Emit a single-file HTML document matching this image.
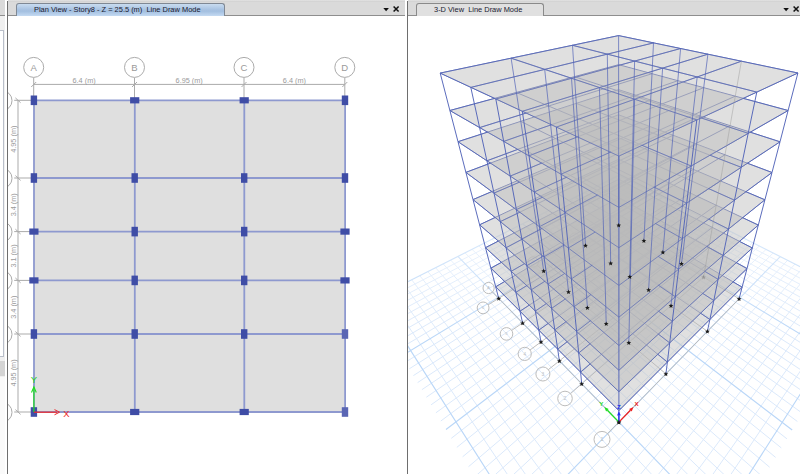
<!DOCTYPE html><html><head><meta charset="utf-8"><title>ETABS views</title><style>
html,body{margin:0;padding:0}
body{width:800px;height:474px;position:relative;overflow:hidden;background:#fff;font-family:"Liberation Sans",Arial,sans-serif}
.a{position:absolute}
.bar{position:absolute;top:0;height:15px;background:#dadada;border-bottom:1px solid #8e8e8e}
.bar:before{content:"";position:absolute;left:0;right:0;top:0;height:2px;background:linear-gradient(#e4e4e4,#cfcfcf)}
.tab{position:absolute;top:3px;height:13px;box-sizing:border-box;border:1px solid #8a8a8a;border-bottom:none;border-radius:3px 3px 0 0;font-size:8px;line-height:10px;white-space:pre;color:#1a1a30}
.tab span{position:absolute;top:1px;transform-origin:0 50%;transform:scaleX(0.929)}
.ic{position:absolute;top:0}
</style></head><body>
<div class="a" style="left:0;top:0;width:5px;height:15px;background:#dadada;border-bottom:1px solid #8e8e8e"></div>
<div class="a" style="left:0;top:16px;width:5px;height:458px;background:#f0f0f0"></div>
<div class="a" style="left:-3px;top:30px;width:5px;height:325px;background:#fff;border:1px solid #b9bfca"></div>
<div class="a" style="left:0;top:361px;width:5px;height:15px;background:#d4d4d4"></div>
<div class="a" style="left:0;top:377px;width:5px;height:97px;background:#fafafa"></div>
<div class="a" style="left:5px;top:0;width:2px;height:474px;background:#fff"></div>
<div class="a" style="left:7px;top:1px;width:1px;height:473px;background:#6e6e6e"></div>
<div class="bar" style="left:8px;width:397px"></div>
<div class="a" style="left:405px;top:0;width:2px;height:474px;background:#fff"></div>
<div class="a" style="left:407px;top:1px;width:1px;height:473px;background:#6e6e6e"></div>
<div class="bar" style="left:408px;width:392px"></div>
<div class="tab" style="left:16px;width:209px;background:linear-gradient(#c9dcf0 0%,#a9c3e2 45%,#a3bfe0 60%,#c4daf2 100%);border-color:#7f8894"><span id="t1" style="left:16.8px">Plan View - Story8 - Z = 25.5 (m)  Line Draw Mode</span></div>
<div class="tab" style="left:416px;width:128px;background:#e0e0e0"><span id="t2" style="left:16.8px">3-D View  Line Draw Mode</span></div>
<svg class="ic" style="left:383px" width="18" height="16" viewBox="0 0 18 16"><path d="M0.3 8h5.6l-2.8 3.2z" fill="#111"/><path d="M10.6 6.4l5 5.2M15.6 6.4l-5 5.2" stroke="#111" stroke-width="1.5" fill="none"/></svg>
<svg class="ic" style="left:783px" width="18" height="16" viewBox="0 0 18 16"><path d="M0.3 8h5.6l-2.8 3.2z" fill="#111"/><path d="M10.6 6.4l5 5.2M15.6 6.4l-5 5.2" stroke="#111" stroke-width="1.5" fill="none"/></svg>
<svg width="397" height="458" viewBox="8 16 397 458" style="position:absolute;left:8px;top:16px">
<rect x="33.7" y="100.3" width="311.1" height="311.7" fill="#dfdfdf"/>
<path d="M33.7 77.4V100.3M31.2 87L36.2 82M134.5 77.4V100.3M132.0 87L137.0 82M244.0 77.4V100.3M241.5 87L246.5 82M344.8 77.4V100.3M342.3 87L347.3 82M33.7 84.4H344.8M14.2 100.3H33.7M15.4 97.9L20.6 102.7M14.2 178.0H33.7M15.4 175.6L20.6 180.4M14.2 231.6H33.7M15.4 229.2L20.6 234.0M14.2 280.4H33.7M15.4 278.0L20.6 282.8M14.2 334.0H33.7M15.4 331.6L20.6 336.4M14.2 412.0H33.7M15.4 409.6L20.6 414.4M18 100.3V412.0" fill="none" stroke="#ababab" stroke-width="1"/>
<circle cx="33.7" cy="67.4" r="10" fill="#fff" stroke="#ababab"/>
<circle cx="134.5" cy="67.4" r="10" fill="#fff" stroke="#ababab"/>
<circle cx="244.0" cy="67.4" r="10" fill="#fff" stroke="#ababab"/>
<circle cx="344.8" cy="67.4" r="10" fill="#fff" stroke="#ababab"/>
<circle cx="2" cy="100.6" r="10" fill="#fff" stroke="#ababab"/>
<circle cx="2" cy="178.3" r="10" fill="#fff" stroke="#ababab"/>
<circle cx="2" cy="231.9" r="10" fill="#fff" stroke="#ababab"/>
<circle cx="2" cy="280.7" r="10" fill="#fff" stroke="#ababab"/>
<circle cx="2" cy="334.3" r="10" fill="#fff" stroke="#ababab"/>
<circle cx="2" cy="412.3" r="10" fill="#fff" stroke="#ababab"/>
<g font-family="Liberation Sans, Arial, sans-serif" fill="#9a9a9a" text-anchor="middle">
<text x="33.7" y="70.8" font-size="9.5">A</text>
<text x="134.5" y="70.8" font-size="9.5">B</text>
<text x="244.0" y="70.8" font-size="9.5">C</text>
<text x="344.8" y="70.8" font-size="9.5">D</text>
<text x="84.1" y="82.6" font-size="7.3">6.4 (m)</text>
<text x="189.2" y="82.6" font-size="7.3">6.95 (m)</text>
<text x="294.4" y="82.6" font-size="7.3">6.4 (m)</text>
<text transform="translate(16.2 373.0) rotate(-90)" font-size="7.3">4.95 (m)</text>
<text transform="translate(16.2 307.2) rotate(-90)" font-size="7.3">3.4 (m)</text>
<text transform="translate(16.2 256.0) rotate(-90)" font-size="7.3">3.1 (m)</text>
<text transform="translate(16.2 204.8) rotate(-90)" font-size="7.3">3.4 (m)</text>
<text transform="translate(16.2 139.2) rotate(-90)" font-size="7.3">4.95 (m)</text>
</g>
<path d="M34.0 100.3V412.0M134.8 100.3V412.0M244.3 100.3V412.0M345.1 100.3V412.0M33.7 100.3H344.8M33.7 178.0H344.8M33.7 231.6H344.8M33.7 280.4H344.8M33.7 334.0H344.8M33.7 412.0H344.8" fill="none" stroke="#8e99cf" stroke-width="1.8"/>
<rect x="30.7" y="95.5" width="6.4" height="9.6" fill="#3f4da6"/>
<rect x="130.1" y="97.2" width="9.2" height="6.2" fill="#3f4da6"/>
<rect x="239.6" y="97.2" width="9.2" height="6.2" fill="#3f4da6"/>
<rect x="341.8" y="95.5" width="6.4" height="9.6" fill="#3f4da6"/>
<rect x="30.7" y="173.2" width="6.4" height="9.6" fill="#3f4da6"/>
<rect x="131.5" y="173.2" width="6.4" height="9.6" fill="#3f4da6"/>
<rect x="241.0" y="173.2" width="6.4" height="9.6" fill="#3f4da6"/>
<rect x="341.8" y="173.2" width="6.4" height="9.6" fill="#3f4da6"/>
<rect x="29.3" y="228.5" width="9.2" height="6.2" fill="#3f4da6"/>
<rect x="131.5" y="226.8" width="6.4" height="9.6" fill="#3f4da6"/>
<rect x="241.0" y="226.8" width="6.4" height="9.6" fill="#3f4da6"/>
<rect x="340.4" y="228.5" width="9.2" height="6.2" fill="#3f4da6"/>
<rect x="29.3" y="277.3" width="9.2" height="6.2" fill="#3f4da6"/>
<rect x="131.5" y="275.6" width="6.4" height="9.6" fill="#3f4da6"/>
<rect x="241.0" y="275.6" width="6.4" height="9.6" fill="#3f4da6"/>
<rect x="340.4" y="277.3" width="9.2" height="6.2" fill="#3f4da6"/>
<rect x="30.7" y="329.2" width="6.4" height="9.6" fill="#3f4da6"/>
<rect x="131.5" y="329.2" width="6.4" height="9.6" fill="#3f4da6"/>
<rect x="241.0" y="329.2" width="6.4" height="9.6" fill="#3f4da6"/>
<rect x="341.8" y="329.2" width="6.4" height="9.6" fill="#5a66b4"/>
<rect x="30.7" y="407.2" width="6.4" height="9.6" fill="#3f4da6"/>
<rect x="130.1" y="408.9" width="9.2" height="6.2" fill="#3f4da6"/>
<rect x="239.6" y="408.9" width="9.2" height="6.2" fill="#3f4da6"/>
<rect x="341.8" y="407.2" width="6.4" height="9.6" fill="#5a66b4"/>
<path d="M33.9 412.0V387.5" stroke="#1fe01f" stroke-width="1.2" fill="none"/>
<path d="M31.5 392.5l2.4 -5.5l2.4 5.5" stroke="#1fe01f" stroke-width="1.1" fill="none"/>
<path d="M33.9 412.2H57" stroke="#f02828" stroke-width="1.2" fill="none"/>
<path d="M54.5 409.6l5 2.6l-5 2.6" stroke="#f02828" stroke-width="1" fill="none"/>
<text x="33.9" y="382.8" font-family="Liberation Sans, Arial, sans-serif" font-size="9.5" fill="#1fd01f" text-anchor="middle">Y</text>
<text x="66.3" y="416.8" font-family="Liberation Sans, Arial, sans-serif" font-size="9.5" fill="#f02828" text-anchor="middle">X</text>
</svg>
<svg width="392" height="458" viewBox="0 0 392 458" style="position:absolute;left:408px;top:16px">
<g fill="none" stroke-width="1"><path stroke="#dbe9fb" d="M102.5 463.0L-5.6 301.4M319.5 463.4L396.2 349.3M120.9 463.2L-5.1 284.0M301.1 463.6L397.3 327.3M139.3 463.5L-4.7 268.0M282.6 463.8L396.3 310.1M157.7 463.8L3.7 263.8M264.2 464.0L397.3 291.8M176.1 464.0L11.8 259.7M245.7 464.2L396.3 277.5M194.5 464.3L19.8 255.6M227.3 464.4L397.3 262.1M213.0 464.6L27.6 251.7M208.8 464.6L394.7 251.9M231.5 464.9L35.2 247.9M190.3 464.8L387.0 248.0M250.0 465.1L42.7 244.1M171.8 465.0L379.6 244.3M287.1 465.7L57.0 236.8M134.8 465.4L365.1 237.0M305.7 466.0L64.0 233.3M116.2 465.6L358.1 233.4M324.3 466.2L70.8 229.9M97.7 465.8L351.3 230.0M342.9 466.5L77.5 226.5M79.1 466.0L344.6 226.6M355.4 461.4L84.0 223.3M66.7 460.8L338.1 223.3M361.6 451.2L90.3 220.0M60.5 450.7L331.7 220.1M367.6 441.4L96.6 216.9M54.6 440.8L325.4 217.0M373.3 431.9L102.7 213.8M48.8 431.4L319.3 213.9M378.9 422.8L108.7 210.8M43.3 422.3L313.3 210.8M389.4 405.5L120.3 204.9M32.8 405.0L301.7 205.0M394.4 397.3L125.9 202.1M27.9 396.8L296.0 202.1M399.2 389.4L131.4 199.3M23.1 388.8L290.5 199.3M398.4 377.9L136.8 196.6M18.4 381.2L285.1 196.6M397.5 366.9L142.1 193.9M13.9 373.7L279.8 193.9M396.7 356.4L147.3 191.3M9.6 366.6L274.6 191.3M401.1 349.8L152.4 188.7M5.4 359.6L269.5 188.7M400.3 340.1L157.4 186.2M1.3 352.8L264.4 186.2M399.5 330.9L162.3 183.7M-2.7 346.3L259.5 183.7M398.0 313.5L171.9 178.9M-5.1 330.7L250.0 178.9M397.3 305.4L176.6 176.5M-8.8 324.8L245.3 176.5M396.6 297.6L181.1 174.2M-7.3 316.2L240.7 174.2M400.4 292.6L185.6 172.0M-6.0 308.0L236.2 172.0M399.7 285.3L190.0 169.7M-4.7 300.1L231.8 169.7M399.0 278.3L194.3 167.5M-8.1 295.1L227.5 167.5M398.3 271.6L198.6 165.4M-6.8 287.7L223.2 165.4M397.7 265.1L202.8 163.3M-5.5 280.6L219.1 163.3M397.1 258.8L206.9 161.2M-4.3 273.8L215.0 161.2"/><path stroke="#bad7f8" stroke-width="1.15" d="M84.1 462.7L-4.3 323.6M337.9 463.2L397.3 370.2M268.6 465.4L49.9 240.4M153.3 465.2L372.2 240.6M384.2 414.0L114.5 207.8M38.0 413.5L307.4 207.9M398.7 322.0L167.2 181.3M-6.5 340.0L254.7 181.3M396.5 252.8L210.9 159.2M-7.5 269.4L210.9 159.2"/></g>
<defs><linearGradient id="fg" x1="0" y1="0" x2="0" y2="1"><stop offset="0" stop-color="#fff" stop-opacity="0.6"/><stop offset="1" stop-color="#fff" stop-opacity="0"/></linearGradient></defs><rect x="0" y="185" width="392" height="140" fill="url(#fg)"/>
<g fill="none" stroke="#bdbdbd" stroke-width="1"><path d="M331.1 282.8L199.6 417.7M295.6 261.1L162.5 377.6M273.5 247.6L140.3 353.7M254.9 236.2L122.0 334.0M235.9 224.6L103.8 314.3M210.7 209.2L80.1 288.8M210.9 406.1L84.5 276.0M257.9 357.9L129.1 249.3M299.4 315.3L170.6 224.6M331.1 282.8L203.6 204.9"/>
<circle cx="194.0" cy="423.4" r="8.0"/>
<circle cx="157.0" cy="382.5" r="7.3"/>
<circle cx="134.9" cy="358.0" r="7.0"/>
<circle cx="116.7" cy="337.9" r="6.6"/>
<circle cx="98.5" cy="317.9" r="6.3"/>
<circle cx="75.1" cy="291.9" r="5.9"/>
<circle cx="80.6" cy="272.0" r="5.6"/>
<circle cx="125.2" cy="246.0" r="5.2"/>
<circle cx="166.7" cy="221.8" r="4.8"/>
<circle cx="199.8" cy="202.5" r="4.5"/>
</g>
<g font-family="Liberation Sans, sans-serif" fill="#c0c0c0" text-anchor="middle">
<text x="194.0" y="425.4" font-size="5.6">1</text>
<text x="157.0" y="384.3" font-size="5.1">2</text>
<text x="134.9" y="359.8" font-size="4.9">3</text>
<text x="116.7" y="339.6" font-size="4.6">4</text>
<text x="98.5" y="319.4" font-size="4.4">5</text>
<text x="75.1" y="293.4" font-size="4.1">6</text>
<text x="80.6" y="273.4" font-size="3.9">A</text>
<text x="125.2" y="247.3" font-size="3.6">B</text>
<text x="166.7" y="223.0" font-size="3.4">C</text>
<text x="199.8" y="203.7" font-size="3.1">D</text>
</g>
<defs><path id="sup" d="M0.00 -2.20L0.65 -0.59L2.38 -0.47L1.05 0.64L1.47 2.32L0.00 1.40L-1.47 2.32L-1.05 0.64L-2.38 -0.47L-0.65 -0.59Z" fill="#1a1a1a"/></defs>
<path d="M210.9 394.6L87.7 270.8M259.4 346.1L134.0 243.6M301.9 303.5L176.8 218.4M334.1 271.2L210.7 198.5M210.9 394.6L334.1 271.2M172.6 356.1L297.6 249.6M149.7 333.1L275.0 236.3M130.8 314.1L255.9 225.1M112.0 295.2L236.5 213.7M87.7 270.8L210.7 198.5M210.9 375.7L82.9 252.2M261.7 326.9L131.2 225.5M305.8 284.5L175.6 201.0M339.0 252.6L210.7 181.7M210.9 375.7L339.0 252.6M170.7 337.0L300.7 231.5M146.8 313.9L277.2 218.4M127.3 295.1L257.4 207.5M107.9 276.3L237.3 196.4M82.9 252.2L210.7 181.7M210.9 354.3L77.5 231.7M264.3 305.3L128.2 205.7M310.1 263.3L174.4 182.0M344.3 232.0L210.7 163.3M210.9 354.3L344.3 232.0M168.6 315.4L304.3 211.4M143.6 292.4L279.7 198.8M123.3 273.8L259.1 188.2M103.2 255.3L238.2 177.5M77.5 231.7L210.7 163.3M210.9 329.5L71.6 208.8M267.3 280.8L124.8 183.7M315.1 239.5L173.0 161.0M350.3 209.1L210.7 143.3M210.9 329.5L350.3 209.1M166.1 290.7L308.1 189.2M140.0 268.1L282.4 177.1M118.8 249.7L260.9 167.0M98.1 231.7L239.2 156.7M71.6 208.8L210.7 143.3M210.9 301.2L65.0 183.6M270.6 253.2L121.1 159.7M320.5 213.1L171.6 138.3M356.9 183.8L210.6 121.7M210.9 301.2L356.9 183.8M163.4 262.9L312.4 164.9M136.0 240.8L285.4 153.4M113.9 223.0L262.9 143.9M92.3 205.6L240.3 134.3M65.0 183.6L210.6 121.7M210.9 269.4L57.9 156.4M274.4 222.6L117.2 134.0M326.5 184.2L170.0 114.1M364.0 156.5L210.6 98.8M210.9 269.4L364.0 156.5M160.4 232.0L317.0 138.8M131.5 210.7L288.6 128.1M108.4 193.6L265.0 119.3M86.0 177.1L241.4 110.4M57.9 156.4L210.6 98.8M210.9 231.7L50.0 125.7M278.7 187.2L112.8 105.4M333.2 151.3L168.3 87.4M372.0 125.8L210.6 73.7M210.9 231.7L372.0 125.8M156.8 196.1L322.1 109.7M126.3 176.0L292.1 100.0M102.2 160.1L267.4 92.0M78.9 144.8L242.7 84.0M50.0 125.7L210.6 73.7M210.9 191.4L41.9 94.5M283.2 150.0L108.4 76.5M340.2 117.3L166.5 60.7M380.1 94.5L210.6 48.7M210.9 191.4L380.1 94.5M153.1 158.2L327.2 80.2M121.0 139.8L295.7 71.7M95.7 125.4L269.8 64.7M71.6 111.6L244.0 57.7M41.9 94.5L210.6 48.7M210.9 140.1L32.2 57.1M288.8 103.9L103.1 42.2M348.8 76.1L164.5 29.3M389.9 57.0L210.6 19.6M210.9 140.1L389.9 57.0M148.4 111.1L333.4 45.2M114.3 95.3L299.9 38.2M87.8 83.0L272.6 32.5M62.8 71.4L245.5 26.9M32.2 57.1L210.6 19.6" fill="none" stroke="#5264b8" stroke-opacity="1.00" stroke-width="1.00"/>
<polygon points="210.9,394.6 334.1,271.2 210.7,198.5 87.7,270.8" fill="rgba(187,187,187,0.45)"/>
<polygon points="210.9,375.7 339.0,252.6 210.7,181.7 82.9,252.2" fill="rgba(187,187,187,0.45)"/>
<polygon points="210.9,354.3 344.3,232.0 210.7,163.3 77.5,231.7" fill="rgba(187,187,187,0.45)"/>
<polygon points="210.9,329.5 350.3,209.1 210.7,143.3 71.6,208.8" fill="rgba(187,187,187,0.45)"/>
<polygon points="210.9,301.2 356.9,183.8 210.6,121.7 65.0,183.6" fill="rgba(187,187,187,0.45)"/>
<polygon points="210.9,269.4 364.0,156.5 210.6,98.8 57.9,156.4" fill="rgba(187,187,187,0.45)"/>
<polygon points="210.9,231.7 372.0,125.8 210.6,73.7 50.0,125.7" fill="rgba(187,187,187,0.45)"/>
<polygon points="210.9,191.4 380.1,94.5 210.6,48.7 41.9,94.5" fill="rgba(187,187,187,0.45)"/>
<polygon points="210.9,140.1 389.9,57.0 210.6,19.6 32.2,57.1" fill="rgba(187,187,187,0.45)"/>
<path d="M210.9 394.6L87.7 270.8M259.4 346.1L249.8 338.3M301.9 303.5L292.4 297.1M334.1 271.2L325.0 265.8M210.9 394.6L334.1 271.2M172.6 356.1L182.5 347.7M149.7 333.1L159.3 325.6M130.8 314.1L140.1 307.5M112.0 295.2L121.5 289.0M87.7 270.8L96.8 265.4M210.9 375.7L82.9 252.2M261.7 326.9L250.3 318.1M305.8 284.5L294.5 277.3M339.0 252.6L328.0 246.5M210.9 375.7L339.0 252.6M170.7 337.0L182.4 327.4M146.8 313.9L158.3 305.5M127.3 295.1L138.4 287.5M107.9 276.3L119.2 269.4M82.9 252.2L93.8 246.2M210.9 354.3L77.5 231.7M264.3 305.3L250.5 295.2M310.1 263.3L296.4 255.1M344.3 232.0L331.4 225.4M210.9 354.3L344.3 232.0M168.6 315.4L182.7 304.5M143.6 292.4L157.6 282.8M123.3 273.8L137.0 265.2M103.2 255.3L116.5 247.7M77.5 231.7L90.4 225.1M210.9 329.5L71.6 208.8M267.3 280.8L250.3 269.2M315.1 239.5L298.7 230.4M350.3 209.1L334.3 201.5M210.9 329.5L350.3 209.1M166.1 290.7L182.9 278.7M140.0 268.1L156.7 257.5M118.8 249.7L135.7 239.9M98.1 231.7L114.5 223.0M71.6 208.8L87.6 201.3M210.9 301.2L65.0 183.6M270.6 253.2L250.2 240.4M320.5 213.1L300.7 203.2M356.9 183.8L337.5 175.6M210.9 301.2L356.9 183.8M163.4 262.9L184.2 249.2M136.0 240.8L156.5 228.8M113.9 223.0L134.1 212.3M92.3 205.6L112.1 196.1M65.0 183.6L84.3 175.4M210.9 269.4L57.9 156.4M274.4 222.6L247.3 207.4M326.5 184.2L300.2 172.4M364.0 156.5L338.9 147.1M210.9 269.4L364.0 156.5M160.4 232.0L187.1 216.1M131.5 210.7L158.0 196.7M108.4 193.6L134.5 181.2M86.0 177.1L111.6 166.1M57.9 156.4L82.9 147.0M210.9 231.7L50.0 125.7M278.7 187.2L245.7 170.9M333.2 151.3L302.0 139.2M372.0 125.8L342.1 116.2M210.9 231.7L372.0 125.8M156.8 196.1L189.6 179.0M126.3 176.0L158.7 161.2M102.2 160.1L133.9 147.0M78.9 144.8L110.1 133.3M50.0 125.7L79.8 116.1M210.9 191.4L41.9 94.5M283.2 150.0L233.7 129.2M340.2 117.3L292.8 101.8M380.1 94.5L334.9 82.3M210.9 191.4L380.1 94.5M153.1 158.2L203.0 135.9M121.0 139.8L169.7 120.8M95.7 125.4L143.8 108.6M71.6 111.6L118.3 97.0M41.9 94.5L87.0 82.3M210.9 140.1L32.2 57.1M288.8 103.9L103.1 42.2M348.8 76.1L164.5 29.3M389.9 57.0L210.6 19.6M210.9 140.1L389.9 57.0M148.4 111.1L333.4 45.2M114.3 95.3L299.9 38.2M87.8 83.0L272.6 32.5M62.8 71.4L245.5 26.9M32.2 57.1L210.6 19.6" fill="none" stroke="#5264b8" stroke-opacity="0.60" stroke-width="1.00"/>
<path d="M220.8 326.6L221.1 314.8M198.2 307.6L197.9 295.8M179.4 291.7L178.6 280.1M160.5 275.8L159.3 264.3M135.7 254.9L134.0 243.6M263.0 289.6L264.3 278.0M240.6 273.8L241.3 262.3M221.8 260.6L222.0 249.2M202.7 247.2L202.5 235.9M177.5 229.4L176.8 218.4M273.5 247.6L275.0 236.3M254.9 236.2L255.9 225.1M235.9 224.6L236.5 213.7M210.7 209.2L210.7 198.5M221.1 314.8L221.5 295.7M197.9 295.8L197.4 276.9M178.6 280.1L177.3 261.4M159.3 264.3L157.3 245.8M134.0 243.6L131.2 225.5M264.3 278.0L266.5 259.3M241.3 262.3L242.5 243.9M222.0 249.2L222.4 231.0M202.5 235.9L202.2 218.1M176.8 218.4L175.6 201.0M275.0 236.3L277.2 218.4M255.9 225.1L257.4 207.5M236.5 213.7L237.3 196.4M210.7 198.5L210.7 181.7M221.5 295.7L222.0 274.4M197.4 276.9L196.7 255.9M177.3 261.4L175.9 240.6M157.3 245.8L155.1 225.4M131.2 225.5L128.2 205.7M266.5 259.3L268.8 238.6M242.5 243.9L243.8 223.5M222.4 231.0L222.9 211.0M202.2 218.1L201.9 198.4M175.6 201.0L174.4 182.0M277.2 218.4L279.7 198.8M257.4 207.5L259.1 188.2M237.3 196.4L238.2 177.5M210.7 181.7L210.7 163.3M222.0 274.4L222.6 250.4M196.7 255.9L196.1 232.3M175.9 240.6L174.3 217.4M155.1 225.4L152.7 202.7M128.2 205.7L124.8 183.7M268.8 238.6L271.5 215.4M243.8 223.5L245.2 200.9M222.9 211.0L223.4 188.8M201.9 198.4L201.5 176.8M174.4 182.0L173.0 161.0M279.7 198.8L282.4 177.1M259.1 188.2L260.9 167.0M238.2 177.5L239.2 156.7M210.7 163.3L210.7 143.3M222.6 250.4L223.2 223.6M196.1 232.3L195.3 206.1M174.3 217.4L172.5 191.9M152.7 202.7L150.0 177.8M124.8 183.7L121.1 159.7M271.5 215.4L274.4 189.9M245.2 200.9L246.8 176.0M223.4 188.8L223.9 164.6M201.5 176.8L201.1 153.1M173.0 161.0L171.6 138.3M282.4 177.1L285.4 153.4M260.9 167.0L262.9 143.9M239.2 156.7L240.3 134.3M210.7 143.3L210.6 121.7M223.2 223.6L223.9 194.2M195.3 206.1L194.5 177.6M172.5 191.9L170.6 164.1M150.0 177.8L147.1 150.9M121.1 159.7L117.2 134.0M274.4 189.9L277.6 162.3M246.8 176.0L248.4 149.2M223.9 164.6L224.5 138.5M201.1 153.1L200.7 127.9M171.6 138.3L170.0 114.1M285.4 153.4L288.6 128.1M262.9 143.9L265.0 119.3M240.3 134.3L241.4 110.4M210.6 121.7L210.6 98.8M223.9 194.2L224.7 160.6M194.5 177.6L193.6 145.2M170.6 164.1L168.4 132.8M147.1 150.9L143.9 120.7M117.2 134.0L112.8 105.4M277.6 162.3L281.1 131.1M248.4 149.2L250.3 119.2M224.5 138.5L225.2 109.4M200.7 127.9L200.3 99.8M170.0 114.1L168.3 87.4M288.6 128.1L292.1 100.0M265.0 119.3L267.4 92.0M241.4 110.4L242.7 84.0M210.6 98.8L210.6 73.7M224.7 160.6L225.6 125.8M193.6 145.2L192.6 111.9M168.4 132.8L166.2 100.8M143.9 120.7L140.6 90.0M112.8 105.4L108.4 76.5M281.1 131.1L284.8 99.2M250.3 119.2L252.3 88.6M225.2 109.4L225.8 80.0M200.3 99.8L199.8 71.5M168.3 87.4L166.5 60.7M292.1 100.0L295.7 71.7M267.4 92.0L269.8 64.7M242.7 84.0L244.0 57.7M210.6 73.7L210.6 48.7M225.6 125.8L226.6 83.3M192.6 111.9L191.4 71.6M166.2 100.8L163.5 62.3M140.6 90.0L136.7 53.4M108.4 76.5L103.1 42.2M284.8 99.2L289.2 61.0M252.3 88.6L254.6 52.2M225.8 80.0L226.6 45.1M199.8 71.5L199.3 38.1M166.5 60.7L164.5 29.3M295.7 71.7L299.9 38.2M269.8 64.7L272.6 32.5M244.0 57.7L245.5 26.9M210.6 48.7L210.6 19.6" fill="none" stroke="#5264b8" stroke-opacity="0.70" stroke-width="1.00"/>
<path d="M210.9 406.1L210.9 394.6M173.7 367.8L172.6 356.1M151.4 344.9L149.7 333.1M133.0 325.9L130.8 314.1M114.6 307.0L112.0 295.2M90.7 282.4L87.7 270.8M257.9 357.9L259.4 346.1M299.4 315.3L301.9 303.5M331.1 282.8L334.1 271.2M210.9 394.6L210.9 375.7M172.6 356.1L170.7 337.0M149.7 333.1L146.8 313.9M130.8 314.1L127.3 295.1M112.0 295.2L107.9 276.3M87.7 270.8L82.9 252.2M259.4 346.1L261.7 326.9M301.9 303.5L305.8 284.5M334.1 271.2L339.0 252.6M210.9 375.7L210.9 354.3M170.7 337.0L168.6 315.4M146.8 313.9L143.6 292.4M127.3 295.1L123.3 273.8M107.9 276.3L103.2 255.3M82.9 252.2L77.5 231.7M261.7 326.9L264.3 305.3M305.8 284.5L310.1 263.3M339.0 252.6L344.3 232.0M210.9 354.3L210.9 329.5M168.6 315.4L166.1 290.7M143.6 292.4L140.0 268.1M123.3 273.8L118.8 249.7M103.2 255.3L98.1 231.7M77.5 231.7L71.6 208.8M264.3 305.3L267.3 280.8M310.1 263.3L315.1 239.5M344.3 232.0L350.3 209.1M210.9 329.5L210.9 301.2M166.1 290.7L163.4 262.9M140.0 268.1L136.0 240.8M118.8 249.7L113.9 223.0M98.1 231.7L92.3 205.6M71.6 208.8L65.0 183.6M267.3 280.8L270.6 253.2M315.1 239.5L320.5 213.1M350.3 209.1L356.9 183.8M210.9 301.2L210.9 269.4M163.4 262.9L160.4 232.0M136.0 240.8L131.5 210.7M113.9 223.0L108.4 193.6M92.3 205.6L86.0 177.1M65.0 183.6L57.9 156.4M270.6 253.2L274.4 222.6M320.5 213.1L326.5 184.2M356.9 183.8L364.0 156.5M210.9 269.4L210.9 231.7M160.4 232.0L156.8 196.1M131.5 210.7L126.3 176.0M108.4 193.6L102.2 160.1M86.0 177.1L78.9 144.8M57.9 156.4L50.0 125.7M274.4 222.6L278.7 187.2M326.5 184.2L333.2 151.3M364.0 156.5L372.0 125.8M210.9 231.7L210.9 191.4M156.8 196.1L153.1 158.2M126.3 176.0L121.0 139.8M102.2 160.1L95.7 125.4M78.9 144.8L71.6 111.6M50.0 125.7L41.9 94.5M278.7 187.2L283.2 150.0M333.2 151.3L340.2 117.3M372.0 125.8L380.1 94.5M210.9 191.4L210.9 140.1M153.1 158.2L148.4 111.1M121.0 139.8L114.3 95.3M95.7 125.4L87.8 83.0M71.6 111.6L62.8 71.4M41.9 94.5L32.2 57.1M283.2 150.0L288.8 103.9M340.2 117.3L348.8 76.1M380.1 94.5L389.9 57.0" fill="none" stroke="#5264b8" stroke-opacity="0.95" stroke-width="1.00"/>
<path d="M295.6 261.1L333.4 45.2" stroke="#9a9a9a" stroke-opacity="0.45" stroke-width="1" fill="none"/>
<use href="#sup" x="295.6" y="261.1" opacity="0.22"/>
<use href="#sup" x="210.9" y="406.1"/><use href="#sup" x="173.7" y="367.8"/><use href="#sup" x="151.4" y="344.9"/><use href="#sup" x="133.0" y="325.9"/><use href="#sup" x="114.6" y="307.0"/><use href="#sup" x="90.7" y="282.4"/><use href="#sup" x="257.9" y="357.9"/><use href="#sup" x="220.8" y="326.6"/><use href="#sup" x="198.2" y="307.6"/><use href="#sup" x="179.4" y="291.7"/><use href="#sup" x="160.5" y="275.8"/><use href="#sup" x="135.7" y="254.9"/><use href="#sup" x="299.4" y="315.3"/><use href="#sup" x="263.0" y="289.6"/><use href="#sup" x="240.6" y="273.8"/><use href="#sup" x="221.8" y="260.6"/><use href="#sup" x="202.7" y="247.2"/><use href="#sup" x="177.5" y="229.4"/><use href="#sup" x="331.1" y="282.8"/><use href="#sup" x="273.5" y="247.6"/><use href="#sup" x="254.9" y="236.2"/><use href="#sup" x="235.9" y="224.6"/><use href="#sup" x="210.7" y="209.2"/>
<path d="M210.9 406.1L222.4 394.3" stroke="#f02020" stroke-width="1.3" fill="none"/><path d="M225.5 391.1L223.7 395.6L221.1 393.0Z" fill="#f02020"/><text x="228.5" y="390.4" font-family="Liberation Sans, sans-serif" font-size="6.2" font-weight="bold" fill="#f02020" text-anchor="middle">X</text>
<path d="M210.9 406.1L199.4 394.3" stroke="#20e020" stroke-width="1.3" fill="none"/><path d="M196.3 391.0L200.7 393.0L198.1 395.5Z" fill="#20e020"/><text x="193.4" y="390.3" font-family="Liberation Sans, sans-serif" font-size="6.2" font-weight="bold" fill="#20e020" text-anchor="middle">Y</text>
<path d="M210.9 406.1L210.9 399.5" stroke="#2030f0" stroke-width="1.3" fill="none"/><path d="M210.9 395.0L212.7 399.5L209.1 399.5Z" fill="#2030f0"/><text x="210.9" y="393.1" font-family="Liberation Sans, sans-serif" font-size="6.2" font-weight="bold" fill="#2030f0" text-anchor="middle">Z</text>
<use href="#sup" x="210.9" y="406.1"/>
</svg>
</body></html>
